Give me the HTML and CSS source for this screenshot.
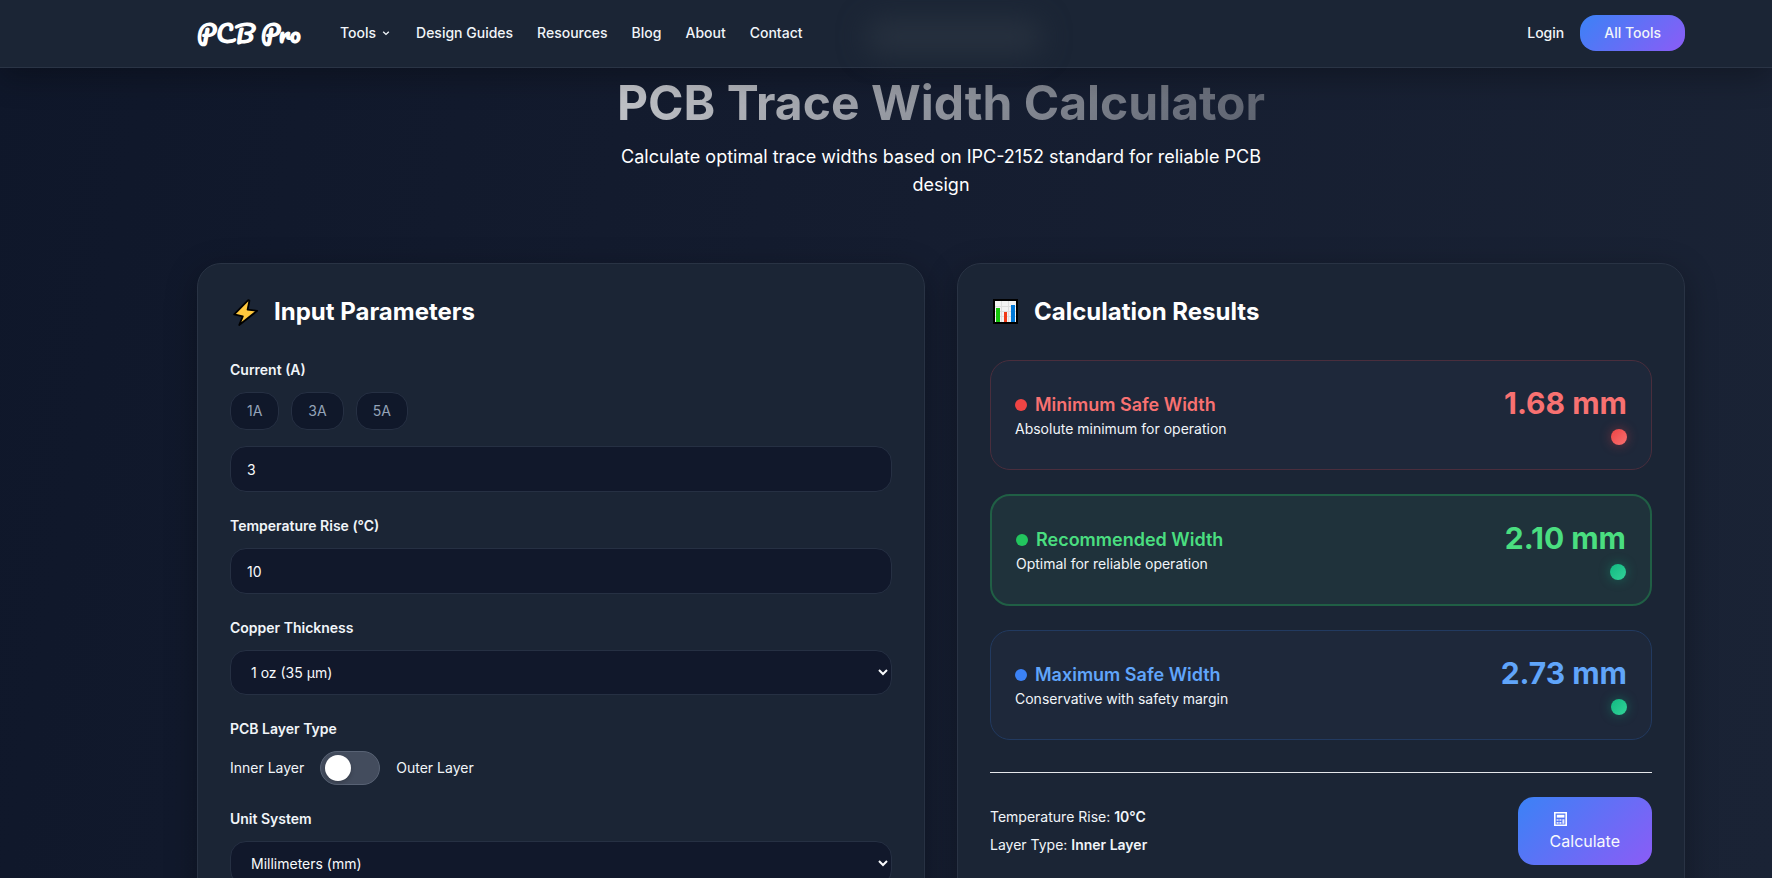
FILE: index.html
```html
<!DOCTYPE html>
<html lang="en">
<head>
    <meta charset="utf-8">
    <meta name="viewport" content="width=device-width, initial-scale=1">
    <title>PCB Trace Width Calculator - PCB Pro</title>
    <link rel="stylesheet" href="styles.css">
</head>
<body>

<header class="site-header">
    <div class="container header-inner">
        <a class="logo" href="#">PCB Pro</a>
        <nav class="main-nav">
            <a href="#">Tools
                <svg class="chevron" viewBox="0 0 12 12" width="12" height="12" aria-hidden="true"><path d="M3.2 4.8 6 7.4l2.8-2.6" fill="none" stroke="currentColor" stroke-width="1.4"/></svg>
            </a>
            <a href="#">Design Guides</a>
            <a href="#">Resources</a>
            <a href="#">Blog</a>
            <a href="#">About</a>
            <a href="#">Contact</a>
        </nav>
        <div class="header-actions">
            <a href="#">Login</a>
            <a class="btn-tools" href="#">All Tools</a>
        </div>
    </div>
</header>

<main class="container">
    <section class="hero">
        <h1>PCB Trace Width Calculator</h1>
        <p>Calculate optimal trace widths based on IPC-2152 standard for reliable PCB design</p>
    </section>

    <div class="panels">
        <form class="card">
            <h2>
                <svg class="card-icon" viewBox="0 0 32 32" width="32" height="32" aria-hidden="true">
                    <path d="M18.2 4.2 4.2 18.4l8.6 2-3.6 8.6L27.2 14.8l-9.6-1.2 1.8-8.9Z" fill="#ffc83d" stroke="#000" stroke-width="1.8" stroke-linejoin="round"/>
                </svg>
                Input Parameters
            </h2>

            <div class="field">
                <label for="current">Current (A)</label>
                <div class="chips">
                    <button type="button">1A</button>
                    <button type="button">3A</button>
                    <button type="button">5A</button>
                </div>
                <input class="control" id="current" type="text" inputmode="decimal" value="3">
            </div>

            <div class="field">
                <label for="temp">Temperature Rise (°C)</label>
                <input class="control" id="temp" type="text" inputmode="decimal" value="10">
            </div>

            <div class="field">
                <label for="copper">Copper Thickness</label>
                <select class="control" id="copper">
                    <option>1 oz (35 µm)</option>
                </select>
            </div>

            <div class="field">
                <label for="layer">PCB Layer Type</label>
                <div class="toggle-row">
                    <span>Inner Layer</span>
                    <input class="toggle" id="layer" type="checkbox" role="switch">
                    <span>Outer Layer</span>
                </div>
            </div>

            <div class="field">
                <label for="units">Unit System</label>
                <select class="control" id="units">
                    <option>Millimeters (mm)</option>
                </select>
            </div>
        </form>

        <section class="card">
            <h2>
                <svg class="card-icon" viewBox="0 0 32 32" width="32" height="32" aria-hidden="true">
                    <rect x="4" y="4" width="23" height="23" fill="#f3f3f3" stroke="#000" stroke-width="2"/>
                    <path d="M5 10.5h21M5 15.5h21M5 20.5h21M11.5 5v21M18.5 5v21" stroke="#dedede"/>
                    <path d="M6 12h4v14H6z" fill="#16c60c"/>
                    <path d="M14 16h3v10h-3z" fill="#f03a17"/>
                    <path d="M21 9h4v17h-4z" fill="#0078d7"/>
                </svg>
                Calculation Results
            </h2>

            <div class="results">
                <div class="result result-min">
                    <div>
                        <h3>Minimum Safe Width</h3>
                        <p>Absolute minimum for operation</p>
                    </div>
                    <div class="reading">
                        <output>1.68 mm</output>
                        <span class="status status-bad"></span>
                    </div>
                </div>
                <div class="result result-rec">
                    <div>
                        <h3>Recommended Width</h3>
                        <p>Optimal for reliable operation</p>
                    </div>
                    <div class="reading">
                        <output>2.10 mm</output>
                        <span class="status"></span>
                    </div>
                </div>
                <div class="result result-max">
                    <div>
                        <h3>Maximum Safe Width</h3>
                        <p>Conservative with safety margin</p>
                    </div>
                    <div class="reading">
                        <output>2.73 mm</output>
                        <span class="status"></span>
                    </div>
                </div>
            </div>

            <div class="summary">
                <div class="summary-text">
                    <p>Temperature Rise: <strong>10°C</strong></p>
                    <p>Layer Type: <strong>Inner Layer</strong></p>
                </div>
                <button class="btn-calc" type="button">
                    <svg viewBox="0 0 20 20" width="20" height="20" aria-hidden="true">
                        <path d="M4.8 3.7h11.4v12.6H4.8z" fill="none" stroke="#fff" stroke-width="1.6"/>
                        <path d="M6.8 5.8h7.6v2.8H6.8z" fill="#fff"/>
                        <path d="M6.6 10.3h2v1.4h-2zM9.4 10.3h2v1.4h-2zM12.4 10.3h2v4.4h-2zM6.6 13h2v1.7h-2zM9.4 13h2v1.7h-2z" fill="#fff" fill-opacity=".85"/>
                    </svg>
                    Calculate
                </button>
            </div>
        </section>
    </div>
</main>

</body>
</html>
```
FILE: styles.css
```css
* {
    box-sizing: border-box;
    margin: 0;
}

body {
    height: 100vh;
    overflow: hidden;
    background: linear-gradient(100deg, #0f172a 0%, #151d30 50%, #1a2335 100%);
    color: #f1f5f9;
    font: 14px/20px Inter, "Liberation Sans", sans-serif;
}

a {
    color: inherit;
    text-decoration: none;
}

.container {
    padding: 0 87px 0 197px;
}

/* header */

.site-header {
    position: relative;
    padding: 15px 0 16px;
    background: #1b2535;
    border-bottom: 1px solid #2a3445;
    box-shadow: 0 8px 32px rgba(0, 0, 0, 0.3);
}

.site-header::before {
    content: "";
    position: absolute;
    left: 866px;
    top: 20px;
    width: 176px;
    height: 34px;
    border-radius: 16px;
    background: #27313f;
    filter: blur(14px);
}

.header-inner {
    position: relative;
    display: flex;
    align-items: center;
    height: 36px;
    font-weight: 500;
}

.logo {
    width: 103px;
    margin-right: 40px;
    color: #fff;
    font: 700 24px/36px Pacifico, cursive;
    white-space: nowrap;
}

.main-nav {
    display: flex;
    gap: 24px;
}

.main-nav a {
    display: flex;
    align-items: center;
    gap: 4px;
}

.header-actions {
    display: flex;
    align-items: center;
    gap: 16px;
    margin-left: auto;
}

.btn-tools {
    padding: 8px 24px;
    border-radius: 16px;
    background: linear-gradient(135deg, #3b82f6, #8b5cf6);
}

/* hero */

.hero {
    padding: 11px 0 64px;
    text-align: center;
}

.hero h1 {
    width: fit-content;
    margin: 0 auto 16px;
    background: linear-gradient(135deg, rgba(255, 255, 255, 0.75), rgba(255, 255, 255, 0.3));
    background-clip: text;
    -webkit-background-clip: text;
    color: transparent;
    font-size: 48px;
    line-height: 48px;
    font-weight: 700;
}

.hero p {
    max-width: 672px;
    margin: 0 auto;
    color: #fff;
    font-size: 18px;
    line-height: 28px;
}

/* cards */

.panels {
    display: grid;
    grid-template-columns: 1fr 1fr;
    gap: 32px;
}

.card {
    padding: 32px;
    border: 1px solid #293344;
    border-radius: 24px;
    background: #1b2535;
    box-shadow: 0 8px 32px rgba(0, 0, 0, 0.3);
}

.card h2 {
    display: flex;
    align-items: center;
    gap: 12px;
    margin-bottom: 32px;
    color: #fff;
    font-size: 24px;
    line-height: 32px;
    font-weight: 700;
}

/* form */

.field {
    margin-bottom: 24px;
}

.field label {
    display: block;
    margin-bottom: 12px;
    font-weight: 600;
}

.chips {
    display: flex;
    gap: 12px;
    margin-bottom: 16px;
}

.chips button {
    padding: 8px 16px;
    border: 1px solid #263043;
    border-radius: 16px;
    background: #10182a;
    color: #94a3b8;
    font: inherit;
}

.control {
    display: block;
    width: 100%;
    height: 46px;
    padding: 12px 16px;
    border: 1px solid #263043;
    border-radius: 16px;
    background: #11182b;
    color: #f8fafc;
    font: 14px/20px Inter, "Liberation Sans", sans-serif;
}

select.control {
    height: 45px;
}

.toggle-row {
    display: flex;
    align-items: center;
    gap: 16px;
}

.toggle {
    appearance: none;
    display: flex;
    align-items: center;
    width: 60px;
    height: 34px;
    padding: 0 4px;
    border: 1px solid #586274;
    border-radius: 17px;
    background: #434c5d;
}

.toggle::before {
    content: "";
    width: 26px;
    height: 26px;
    border-radius: 50%;
    background: #fff;
    box-shadow: 0 2px 4px rgba(0, 0, 0, 0.2);
}

.toggle:checked {
    justify-content: flex-end;
    background: #3b82f6;
}

/* results */

.results {
    display: grid;
    gap: 24px;
}

.result {
    display: flex;
    justify-content: space-between;
    align-items: center;
    padding: 24px;
    border: 1px solid;
    border-radius: 20px;
    background: #1e283a;
}

.result h3 {
    display: flex;
    align-items: center;
    gap: 8px;
    font-size: 18px;
    line-height: 28px;
    font-weight: 600;
}

.result h3::before {
    content: "";
    width: 12px;
    height: 12px;
    border-radius: 50%;
}

.result-min {
    border-color: #4a2e3d;
}

.result-min h3,
.result-min output {
    color: #f87171;
}

.result-min h3::before {
    background: #ef4444;
}

.result-rec {
    border: 2px solid #205f45;
    background: #1f323b;
}

.result-rec h3,
.result-rec output {
    color: #4ade80;
}

.result-rec h3::before {
    background: #22c55e;
}

.result-max {
    border-color: #223a60;
}

.result-max h3,
.result-max output {
    color: #60a5fa;
}

.result-max h3::before {
    background: #3b82f6;
}

.reading {
    display: flex;
    flex-direction: column;
    align-items: flex-end;
    gap: 8px;
}

.reading output {
    font-size: 30px;
    line-height: 36px;
    font-weight: 700;
}

.status {
    width: 16px;
    height: 16px;
    border-radius: 50%;
    background: linear-gradient(135deg, #10b981, #34d399);
    box-shadow: 0 0 12px rgba(16, 185, 129, 0.4);
}

.status-bad {
    background: linear-gradient(135deg, #ef4444, #f87171);
    box-shadow: 0 0 12px rgba(239, 68, 68, 0.4);
}

.summary {
    display: flex;
    justify-content: space-between;
    align-items: center;
    margin-top: 32px;
    padding-top: 24px;
    border-top: 1px solid #e5e7eb;
}

.summary-text {
    display: grid;
    gap: 8px;
}

.summary-text strong {
    font-weight: 600;
}

.btn-calc {
    padding: 12px 32px;
    border: 0;
    border-radius: 16px;
    background: linear-gradient(135deg, #3b82f6, #8b5cf6);
    color: #f8fafc;
    font: 16px/24px Inter, "Liberation Sans", sans-serif;
    text-align: left;
}

.btn-calc svg {
    display: block;
}
```
